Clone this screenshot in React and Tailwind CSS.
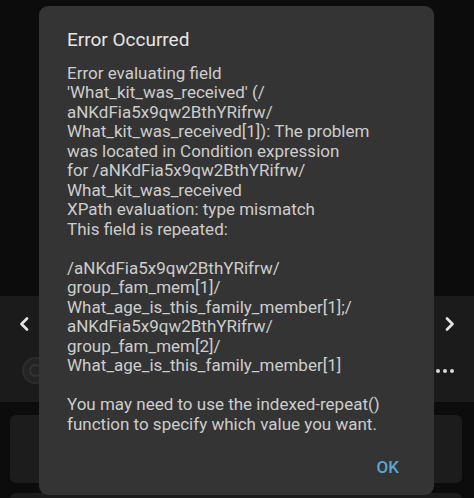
import React from "react";

const lines = [
  "Error evaluating field",
  "'What_kit_was_received' (/",
  "aNKdFia5x9qw2BthYRifrw/",
  "What_kit_was_received[1]): The problem",
  "was located in Condition expression",
  "for /aNKdFia5x9qw2BthYRifrw/",
  "What_kit_was_received",
  "XPath evaluation: type mismatch",
  "This field is repeated:",
  "",
  "/aNKdFia5x9qw2BthYRifrw/",
  "group_fam_mem[1]/",
  "What_age_is_this_family_member[1];/",
  "aNKdFia5x9qw2BthYRifrw/",
  "group_fam_mem[2]/",
  "What_age_is_this_family_member[1]",
  "",
  "You may need to use the indexed-repeat()",
  "function to specify which value you want.",
];

function Chevron({ dir }) {
  return (
    <svg width="12" height="14" viewBox="0 0 12 14" fill="none">
      <path
        d={dir === "left" ? "M9 1.5 3.5 7 9 12.5" : "M3 1.5 8.5 7 3 12.5"}
        stroke="#e4e4e4"
        strokeWidth="2.6"
        strokeLinecap="round"
        strokeLinejoin="round"
      />
    </svg>
  );
}

export default function App() {
  return (
    <div
      className="relative w-[474px] h-[498px] overflow-hidden bg-[#0c0c0c]"
      style={{ fontFamily: "Roboto, 'Noto Sans', sans-serif" }}
    >
      {/* screen behind the dialog */}
      <div className="flex flex-col">
        <div className="h-[296px]" />
        <div className="h-[106px] bg-[#1b1b1b] flex flex-col">
          <div className="flex justify-between items-center px-[18px] pt-[21px]">
            <Chevron dir="left" />
            <Chevron dir="right" />
          </div>
          <div className="flex justify-between items-center pl-[22px] pr-[20px] mt-[26px]">
            <div className="w-[27px] h-[27px] rounded-full bg-[#242424] border-[2px] border-[#2c2c2c] flex items-center justify-center">
              <div className="w-[13px] h-[13px] rounded-full border-[2px] border-[#333333]" />
            </div>
            <div className="flex gap-[3px]">
              <div className="w-[4px] h-[4px] rounded-full bg-[#d8d8d8]" />
              <div className="w-[4px] h-[4px] rounded-full bg-[#d8d8d8]" />
              <div className="w-[4px] h-[4px] rounded-full bg-[#d8d8d8]" />
            </div>
          </div>
        </div>
        <div className="px-[10px] pt-[13px] pr-[12px] flex flex-col gap-[10px]">
          <div className="h-[68px] rounded-[6px] bg-[#1c1c1c]" />
          <div className="h-[68px] rounded-[6px] bg-[#1c1c1c]" />
        </div>
      </div>

      {/* dialog */}
      <div className="absolute left-[39px] top-[6px] w-[395px] h-[489px] rounded-[9px] bg-[#343434] flex flex-col pl-[28px] pt-[22px]">
        <div className="text-[19px] leading-[24px] text-[#e6e6e6]">Error Occurred</div>
        <div className="mt-[11.5px] text-[17px] leading-[19.5px] text-[#cdcdcd]">
          {lines.map((l, i) => (
            <div key={i} className="h-[19.5px] whitespace-nowrap">
              {l}
            </div>
          ))}
        </div>
        <div className="flex justify-end pr-[35px] mt-[23px]">
          <span className="text-[17px] leading-[20px] font-medium text-[#5aa5d3]">OK</span>
        </div>
      </div>
    </div>
  );
}
